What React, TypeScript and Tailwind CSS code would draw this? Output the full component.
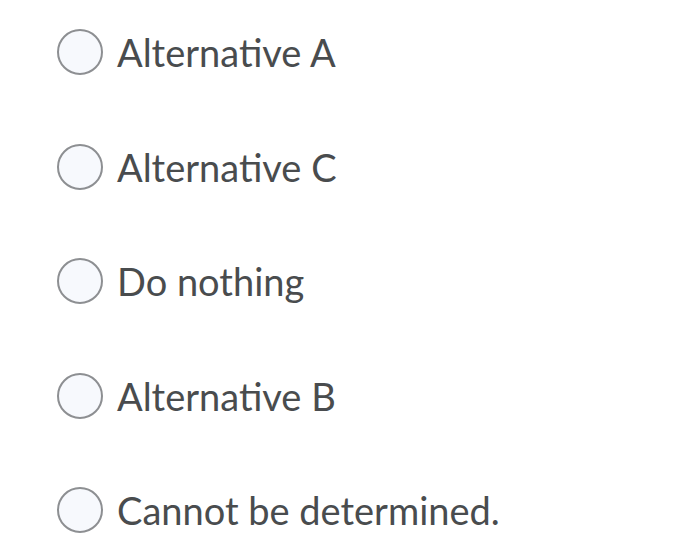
export default function App() {
  const items = ["Alternative A", "Alternative C", "Do nothing", "Alternative B", "Cannot be determined."];
  return (
    <div className="w-[689px] h-[554px] bg-white flex flex-col pt-[29px] pl-[57px] gap-[68.5px]" style={{ fontFamily: "Lato, 'Open Sans', sans-serif" }}>
      {items.map((t) => (
        <label key={t} className="flex items-center h-[46px]">
          <span className="w-[46px] h-[46px] rounded-full border-2 border-[#8d8f92] bg-[#f7f9fd] shrink-0" />
          <span className="ml-[14px] text-[38px] leading-none text-[#494c4e]">{t}</span>
        </label>
      ))}
    </div>
  );
}
